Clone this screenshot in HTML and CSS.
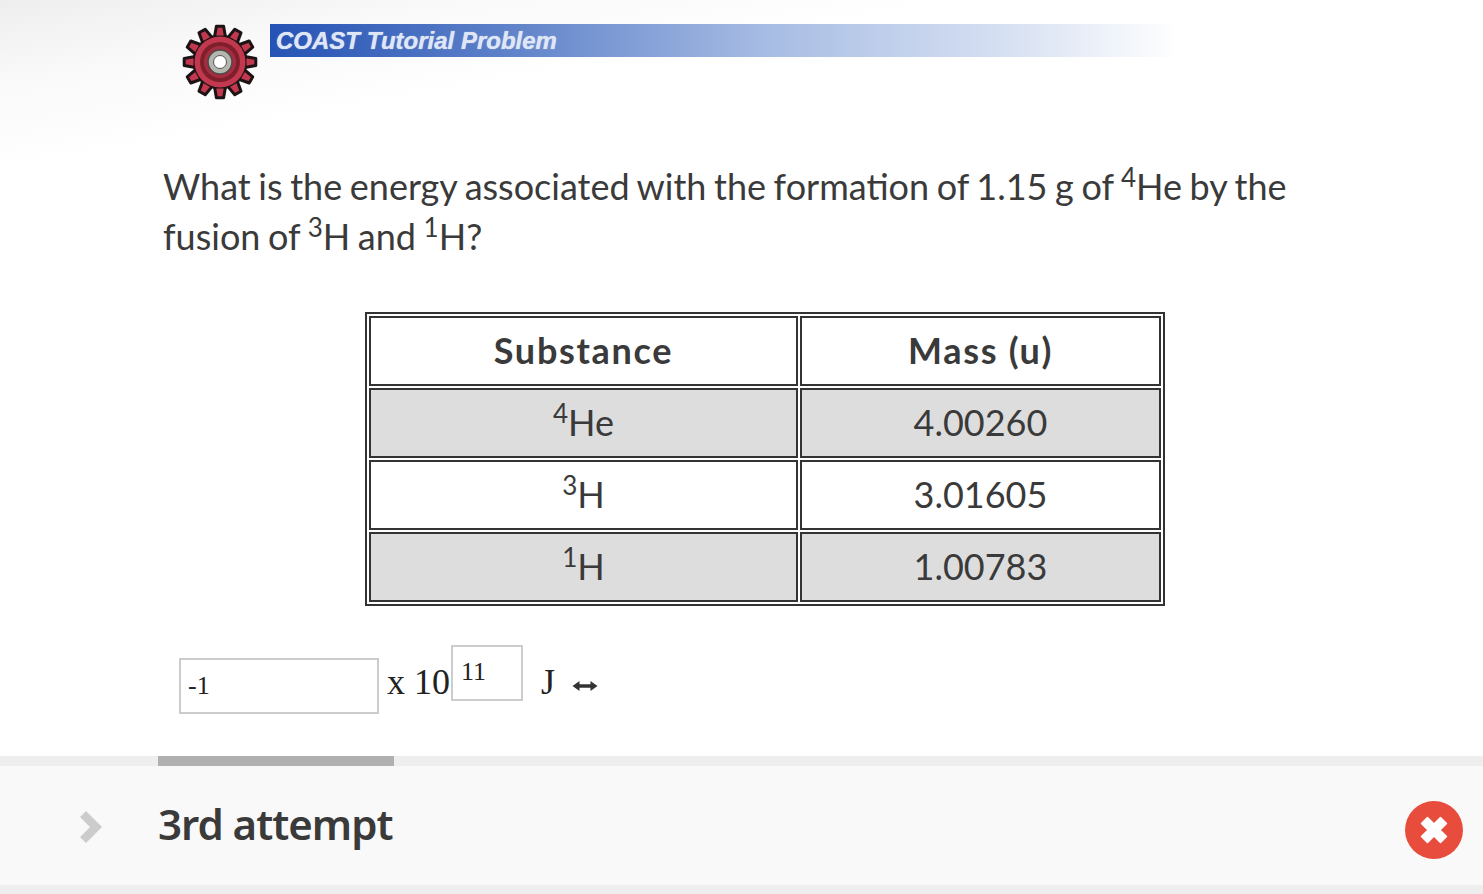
FILE: index.html
```html
<!DOCTYPE html>
<html lang="en">
<head>
  <meta charset="UTF-8" />
  <title>COAST Tutorial Problem</title>
  <link rel="stylesheet" href="styles.css">
</head>
<body>
  <div class="question">
    <div class="banner">
      <svg class="gear" width="80" height="80" viewBox="-40 -40 80 80">
        <defs>
          <path id="tooth" d="M-5.500 -25L-3.600 -35.800H3.600L5.500 -25Z" fill="#c2384e" stroke="#1c1414" stroke-width="3" stroke-linejoin="round" />
        </defs>
        <circle r="27.500" fill="#1c1414" />
        <use href="#tooth" />
        <use href="#tooth" transform="rotate(30)" />
        <use href="#tooth" transform="rotate(60)" />
        <use href="#tooth" transform="rotate(90)" />
        <use href="#tooth" transform="rotate(120)" />
        <use href="#tooth" transform="rotate(150)" />
        <use href="#tooth" transform="rotate(180)" />
        <use href="#tooth" transform="rotate(210)" />
        <use href="#tooth" transform="rotate(240)" />
        <use href="#tooth" transform="rotate(270)" />
        <use href="#tooth" transform="rotate(300)" />
        <use href="#tooth" transform="rotate(330)" />
        <circle r="25.500" fill="#c2384e" />
        <circle r="20" fill="#7e1f2c" />
        <circle r="16" fill="#a82c40" />
        <circle r="12" fill="#b4b6ae" stroke="#4a4a46" stroke-width="1.500" />
        <circle r="6.500" fill="#fff" stroke="#555" stroke-width="1" />
      </svg>
      <div class="banner-title">COAST Tutorial Problem</div>
    </div>

    <p class="question-text">What is the energy associated with the formation of 1.15 g of <sup>4</sup>He by the fusion of <sup>3</sup>H and <sup>1</sup>H?</p>

    <table class="mass-table">
      <tr><th>Substance</th><th>Mass (u)</th></tr>
      <tr class="shaded"><td><sup>4</sup>He</td><td>4.00260</td></tr>
      <tr><td><sup>3</sup>H</td><td>3.01605</td></tr>
      <tr class="shaded"><td><sup>1</sup>H</td><td>1.00783</td></tr>
    </table>

    <div class="answer">
      <input class="answer-value" type="text" value="-1" />
      <span class="times">x 10</span>
      <input class="answer-exp" type="text" value="11" />
      <span class="unit">J</span>
      <svg class="arrows" width="26" height="12" viewBox="0 0 26 12">
        <path d="M4 6H22" stroke="#333" stroke-width="3.500" />
        <path d="M0.500 6L7.500 1V11ZM25.500 6L18.500 1V11Z" fill="#333" />
      </svg>
    </div>
  </div>

  <div class="progress"><div class="progress-fill"></div></div>

  <div class="attempt">
    <svg class="chevron" width="22" height="32" viewBox="0 0 22 32">
      <path d="M6 0L22 16L6 32L0 26L10 16L0 6Z" fill="#ccc" />
    </svg>
    <div class="attempt-label">3rd attempt</div>
    <svg class="wrong" width="58" height="58" viewBox="0 0 58 58">
      <circle cx="29" cy="29" r="29" fill="#e74c3c" />
      <path d="M29 23L35.500 16.500L41.500 22.500L35 29L41.500 35.500L35.500 41.500L29 35L22.500 41.500L16.500 35.500L23 29L16.500 22.500L22.500 16.500Z" fill="#fff" stroke="#fff" stroke-width="1.500" stroke-linejoin="round" />
    </svg>
  </div>
  <div class="footer-band"></div>
</body>
</html>
```

FILE: styles.css
```css
html, body {
  margin: 0;
  height: 894px;
  overflow: hidden;
}
body {
  background: #fff;
  color: #3a3a3a;
  font-family: 'Lato', sans-serif;
}
.question {
  height: 756px;
  box-sizing: border-box;
  padding: 24px 0 0 163px;
  background: linear-gradient(170deg, #eee 0, #f9f9f9 80px, #fff 170px);
}
.banner {
  display: flex;
  align-items: flex-start;
  height: 100px;
  margin-left: 17px;
}
.gear {
  margin: -2px 10px 0 0;
  flex: none;
  filter: blur(0.6px);
}
.banner-title {
  width: 910px;
  height: 33px;
  line-height: 33px;
  padding-left: 6px;
  box-sizing: border-box;
  background: linear-gradient(90deg, #2552b4 0, #5c80c8 25%, #a8bde4 55%, #d5dff2 80%, rgba(255,255,255,0) 100%);
  color: #dfe6f5;
  font-family: 'Liberation Sans', sans-serif;
  font-size: 24px;
  font-style: italic;
  font-weight: bold;
  text-shadow: 0 0 1px #dfe6f5;
}
.question-text {
  width: 1150px;
  margin: 37px 0 0;
  font-size: 36px;
  line-height: 50px;
  word-spacing: -1.6px;
}
.question-text sup, .mass-table sup {
  font-size: 26px;
  line-height: 0;
  vertical-align: baseline;
  position: relative;
  top: -13px;
}
.mass-table {
  width: 800px;
  margin: 51px 0 0 202px;
  border: 2px solid #333;
  border-spacing: 2px;
  font-size: 36px;
}
.mass-table th, .mass-table td {
  height: 64px;
  padding: 0 0 2px;
  border: 2px solid #333;
  text-align: center;
}
.mass-table th:first-child, .mass-table td:first-child {
  width: 425px;
}
.mass-table th {
  font-weight: bold;
  letter-spacing: 1.7px;
}
.shaded td {
  background: #ddd;
}
.answer {
  display: flex;
  align-items: flex-start;
  margin: 39px 0 0 16px;
  font-family: 'Liberation Serif', serif;
  color: #222;
}
.answer input {
  box-sizing: border-box;
  height: 56px;
  border: 2px solid #ccc;
  padding: 0 7px;
  font-family: 'Liberation Serif', serif;
  font-size: 26px;
  color: #222;
  outline: none;
  background: #fff;
}
.answer-value {
  width: 200px;
  margin-top: 13px;
}
.answer .answer-exp {
  width: 72px;
  padding: 0 0 2px 8px;
}
.times {
  margin: 14px 1px 0 8px;
  font-size: 36px;
  line-height: 46px;
}
.unit {
  margin: 14px 0 0 18px;
  font-size: 36px;
  line-height: 46px;
}
.arrows {
  margin: 35px 0 0 17px;
}
.progress {
  height: 10px;
  background: #eee;
}
.progress-fill {
  width: 236px;
  height: 10px;
  margin-left: 158px;
  background: #b0b0b0;
}
.attempt {
  display: flex;
  align-items: center;
  height: 119px;
  background: #f9f9f9;
}
.chevron {
  margin-left: 80px;
  margin-top: 3px;
  flex: none;
}
.attempt-label {
  margin-left: 56px;
  margin-top: -5px;
  font-family: 'Noto Sans', sans-serif;
  font-size: 42px;
  font-weight: 600;
  letter-spacing: -1px;
  color: #3a3a3a;
}
.wrong {
  margin-left: auto;
  margin-right: 20px;
  margin-top: 9px;
}
.footer-band {
  height: 9px;
  background: #eee;
}
```
